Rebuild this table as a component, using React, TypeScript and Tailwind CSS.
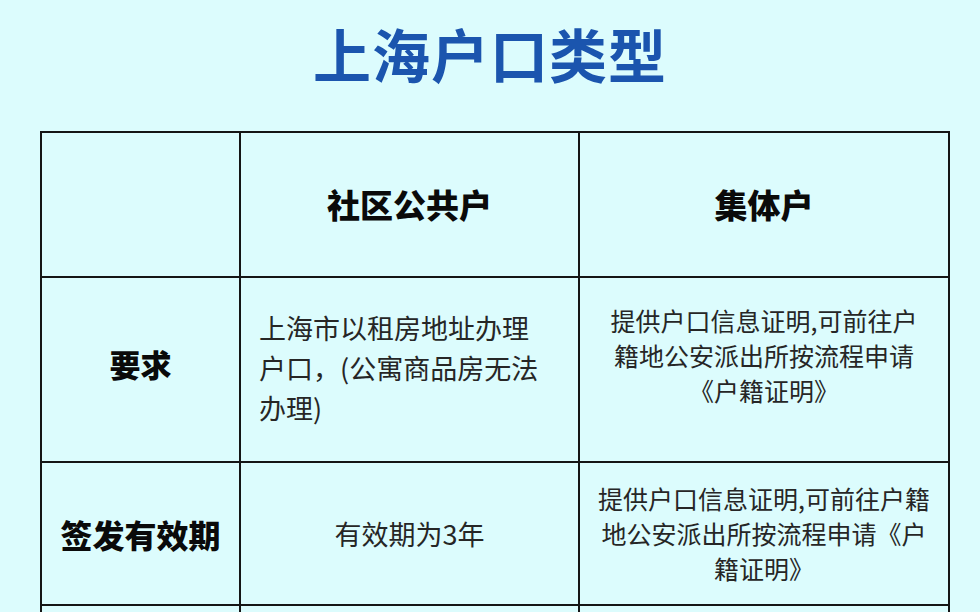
import React from "react";

const cjk = { fontFamily: '"Noto Sans CJK SC", "Noto Sans", sans-serif' };

export default function App() {
  return (
    <div className="w-[980px] h-[612px] overflow-hidden bg-[#dcfcfd]" style={cjk}>
      <div className="pt-[24px] flex justify-center">
        <h1 className="text-[58px] leading-none h-[58px] font-bold text-[#1b55ae] tracking-[1px]">
          上海户口类型
        </h1>
      </div>
      <div className="mt-[49px] ml-[40px] w-[908px]">
        <table className="w-full table-fixed border-collapse border-2 border-[#151515]">
          <colgroup>
            <col className="w-[199px]" />
            <col className="w-[339px]" />
            <col className="w-[370px]" />
          </colgroup>
          <tbody>
            <tr className="h-[145px]">
              <td className="border-2 border-[#151515]"></td>
              <td className="border-2 border-[#151515] text-center align-middle text-[33px] font-black text-[#0a0a0a] leading-none">
                社区公共户
              </td>
              <td className="border-2 border-[#151515] text-center align-middle text-[33px] font-black text-[#0a0a0a] leading-none">
                集体户
              </td>
            </tr>
            <tr className="h-[185px]">
              <td className="border-2 border-[#151515] text-center align-middle text-[31px] font-black text-[#0a0a0a] leading-none pb-[12px]">
                要求
              </td>
              <td className="border-2 border-[#151515] align-middle pl-[18px] pr-[10px] text-[27px] leading-[40px] text-[#262626] pb-[4px]">
                上海市以租房地址办理
                <br />
                户口，(公寓商品房无法
                <br />
                办理)
              </td>
              <td className="border-2 border-[#151515] align-middle text-center text-[25px] leading-[35px] text-[#262626] pb-[28px]">
                提供户口信息证明,可前往户
                <br />
                籍地公安派出所按流程申请
                <br />
                《户籍证明》
              </td>
            </tr>
            <tr className="h-[143px]">
              <td className="border-2 border-[#151515] text-center align-middle text-[32px] font-black text-[#0a0a0a] leading-none">
                签发有效期
              </td>
              <td className="border-2 border-[#151515] text-center align-middle text-[27px] leading-none text-[#262626]">
                有效期为3年
              </td>
              <td className="border-2 border-[#151515] align-middle text-center text-[25px] leading-[35px] text-[#262626]">
                提供户口信息证明,可前往户籍
                <br />
                地公安派出所按流程申请《户
                <br />
                籍证明》
              </td>
            </tr>
            <tr className="h-[120px]">
              <td className="border-2 border-[#151515]"></td>
              <td className="border-2 border-[#151515]"></td>
              <td className="border-2 border-[#151515]"></td>
            </tr>
          </tbody>
        </table>
      </div>
    </div>
  );
}
